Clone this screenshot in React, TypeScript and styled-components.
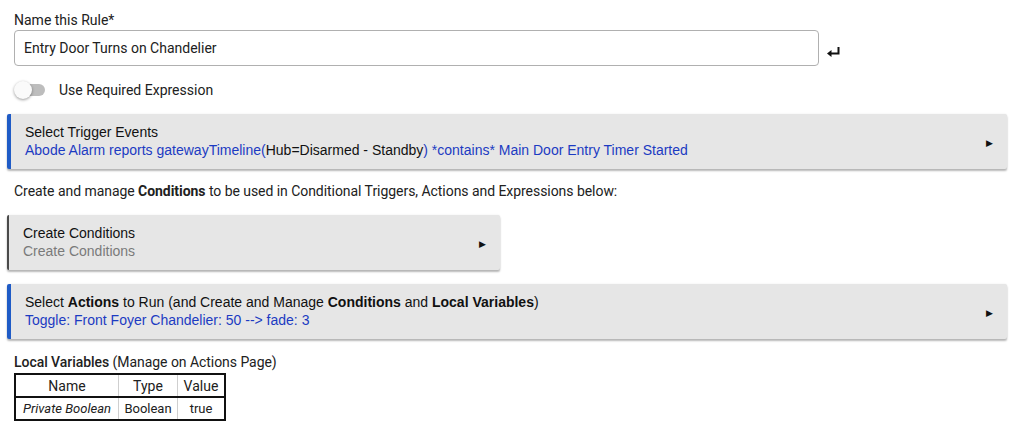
import React from "react";
import styled, { createGlobalStyle } from "styled-components";

const GlobalStyle = createGlobalStyle`
  html, body {
    margin: 0;
    padding: 0;
    background: #ffffff;
  }
  body {
    font-family: Roboto, "Liberation Sans", sans-serif;
    color: #212121;
  }
`;

const Page = styled.div`
  width: 1024px;
  height: 434px;
  padding: 0 7px;
  box-sizing: border-box;
  overflow: hidden;
`;

const Field = styled.div`
  padding: 12px 0 0 7px;
`;

const FieldLabel = styled.div`
  font-size: 14px;
  line-height: 17px;
  color: #212121;
`;

const InputRow = styled.div`
  display: flex;
  align-items: center;
  gap: 7px;
  margin-top: 1px;
`;

const TextBox = styled.div`
  width: 805px;
  height: 36px;
  box-sizing: border-box;
  border: 1px solid #b0b0b0;
  border-radius: 4px;
  padding: 0 9px;
  display: flex;
  align-items: center;
  font-size: 14px;
  color: #212121;
`;

const ReturnIcon = styled.svg`
  width: 16px;
  height: 14px;
  margin-top: 6px;
`;

const ToggleRow = styled.div`
  display: flex;
  align-items: center;
  gap: 12px;
  padding-left: 6px;
  margin-top: 15px;
  height: 18px;
  font-size: 14px;
`;

const Switch = styled.div`
  position: relative;
  width: 34px;
  height: 18px;
`;

const Track = styled.div`
  position: absolute;
  left: 6px;
  top: 3px;
  width: 26px;
  height: 12px;
  border-radius: 6px;
  background: #bdbdbd;
`;

const Knob = styled.div`
  position: absolute;
  left: 1px;
  top: 0;
  width: 18px;
  height: 18px;
  border-radius: 50%;
  background: #fafafa;
  box-shadow: 0 1px 3px rgba(0, 0, 0, 0.4);
`;

const Card = styled.div<{ $accent: string; $width?: number; $top: number }>`
  display: flex;
  align-items: center;
  width: ${(p) => (p.$width ? `${p.$width}px` : "1000px")};
  height: 55px;
  box-sizing: border-box;
  margin-top: ${(p) => p.$top}px;
  background: #e6e6e6;
  border-left: ${(p) => (p.$accent === "blue" ? "4px solid #1f5bc6" : "2px solid #4a4a4a")};
  border-radius: 2px;
  box-shadow: 0 2px 2px rgba(0, 0, 0, 0.28), 0 0 2px rgba(0, 0, 0, 0.08);
  padding: 0 14px;
  font-family: "Liberation Sans", Arial, sans-serif;
  font-size: 14px;
`;

const CardText = styled.div`
  flex: 1;
  line-height: 18px;
  margin-top: -1px;
`;

const CardTitle = styled.div`
  color: #111111;
`;

const CardSub = styled.div<{ $muted?: boolean }>`
  color: ${(p) => (p.$muted ? "#7a7a7a" : "#1c3bc2")};
`;

const Plain = styled.span`
  color: #111111;
`;

const Arrow = styled.span`
  font-size: 9px;
  color: #111;
  margin-top: 2px;
`;

const Note = styled.div<{ $top: number }>`
  padding-left: 7px;
  margin-top: ${(p) => p.$top}px;
  font-size: 14px;
  line-height: 17px;
  color: #212121;
  letter-spacing: -0.05px;
`;

const Strong = styled.span`
  font-weight: 500;
`;

const VarTable = styled.table`
  margin: 2px 0 0 7px;
  border-collapse: collapse;
  border: 2px solid #111;
  font-size: 14px;
  color: #212121;

  th,
  td {
    border-left: 1px solid #cfcfcf;
    text-align: center;
    padding: 0 4px;
  }
  th:first-child,
  td:first-child {
    border-left: none;
  }
  th {
    font-weight: 400;
    height: 21px;
    border-bottom: 2px solid #111;
  }
  td {
    height: 21px;
    font-size: 13px;
  }
`;

export default function App() {
  return (
    <Page>
      <GlobalStyle />
      <Field>
        <FieldLabel>Name this Rule*</FieldLabel>
        <InputRow>
          <TextBox>Entry Door Turns on Chandelier</TextBox>
          <ReturnIcon viewBox="0 0 16 14">
            <path d="M12.5 3 V9.5 H4" stroke="#111" strokeWidth="2" fill="none" />
            <path d="M1 9.5 L5.5 6 V13 Z" fill="#111" />
          </ReturnIcon>
        </InputRow>
      </Field>

      <ToggleRow>
        <Switch>
          <Track />
          <Knob />
        </Switch>
        Use Required Expression
      </ToggleRow>

      <Card $accent="blue" $top={15}>
        <CardText>
          <CardTitle>Select Trigger Events</CardTitle>
          <CardSub>
            Abode Alarm reports gatewayTimeline(<Plain>Hub=Disarmed - Standby</Plain>) *contains* Main Door
            Entry Timer Started
          </CardSub>
        </CardText>
        <Arrow>▶</Arrow>
      </Card>

      <Note $top={14}>
        Create and manage <b>Conditions</b> to be used in Conditional Triggers, Actions and Expressions below:
      </Note>

      <Card $accent="gray" $width={493} $top={15}>
        <CardText>
          <CardTitle>Create Conditions</CardTitle>
          <CardSub $muted>Create Conditions</CardSub>
        </CardText>
        <Arrow>▶</Arrow>
      </Card>

      <Card $accent="blue" $top={14}>
        <CardText>
          <CardTitle>
            Select <b>Actions</b> to Run (and Create and Manage <b>Conditions</b> and <b>Local Variables</b>)
          </CardTitle>
          <CardSub>Toggle: Front Foyer Chandelier: 50 --&gt; fade: 3</CardSub>
        </CardText>
        <Arrow>▶</Arrow>
      </Card>

      <Note $top={15}>
        <Strong>Local Variables</Strong> (Manage on Actions Page)
      </Note>
      <VarTable>
        <thead>
          <tr>
            <th style={{ width: 94 }}>Name</th>
            <th style={{ width: 50 }}>Type</th>
            <th style={{ width: 38 }}>Value</th>
          </tr>
        </thead>
        <tbody>
          <tr>
            <td>
              <i>Private Boolean</i>
            </td>
            <td>Boolean</td>
            <td>true</td>
          </tr>
        </tbody>
      </VarTable>
    </Page>
  );
}
